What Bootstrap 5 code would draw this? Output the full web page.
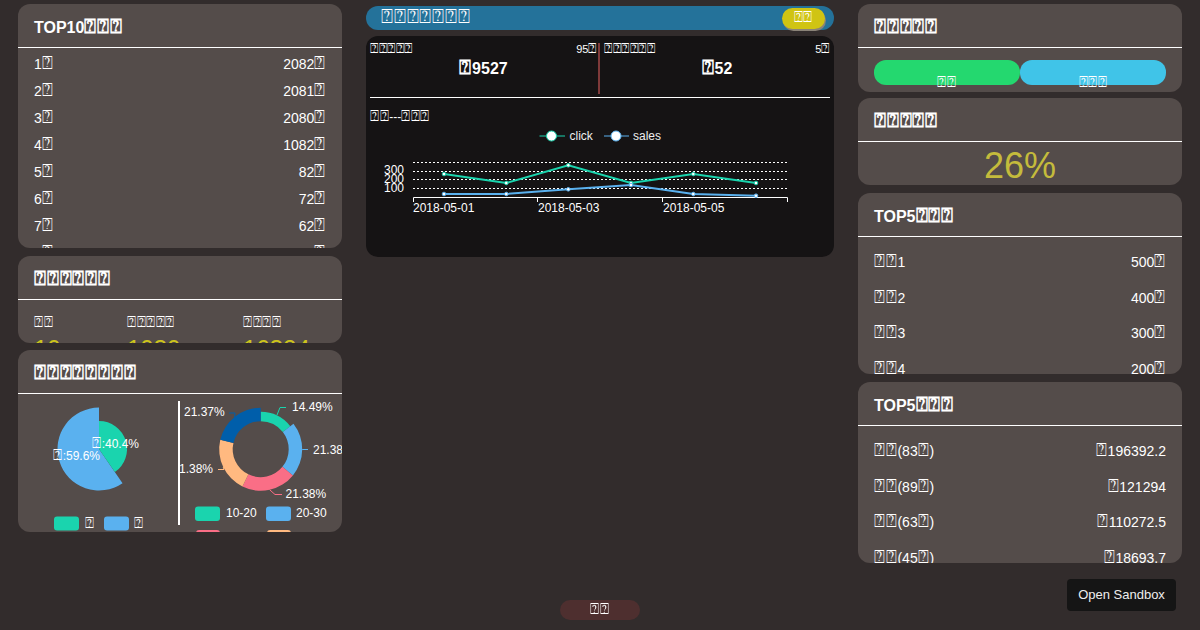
<!doctype html>
<html lang="zh"><head><meta charset="utf-8"><title>Dashboard</title>
<link href="https://cdn.jsdelivr.net/npm/bootstrap@5.3.0/dist/css/bootstrap.min.css" rel="stylesheet">
<style>
html,body{height:100%}
body{background:#322c2c;color:#fff;font:14px/1.5 "Liberation Sans",sans-serif;overflow:hidden}
.q{font-family:"DejaVu Sans",sans-serif;font-size:1.28em;line-height:0;letter-spacing:.04em}
.stage{padding:4px 18px 0;gap:24px}
.side{width:324px;flex:none}
.mid{flex:1 1 auto;min-width:0;padding-top:2px}
.pnl{background:#544c4a;border:0;border-radius:12px;overflow:hidden;color:#fff}
.pnl .card-header{flex:none;background:none;border-bottom:1px solid #fff;border-radius:0;height:44px;padding:4px 16px 0;font-size:16px;font-weight:700;display:flex;align-items:center}
.h244{height:244px}.h87{height:87px}.h88{height:88px}.h182{height:182px}.h181{height:181px}
.m8{margin-top:8px}.m7{margin-top:7px}.m6{margin-top:6px}
.rows27{padding-top:3px}.rows27>div{height:27px;flex:none;align-items:center}
.rows36{padding-top:8px}.rows36>div{height:35.6px;flex:none;align-items:center}
.pad16{padding-left:16px;padding-right:16px}
.tiny{font-size:12px;padding-top:14px;line-height:18px}
.kpi1{width:93px}.kpi2{width:116px}
.big{font-size:24px;color:#cdc41c;line-height:28px;margin-top:3px}
.pct{font-size:36px;line-height:47px;color:#c4bb3c;text-align:center}
.btnrow{padding-top:12px}
.btn-a,.btn-b{flex:1 1 50%;height:25px;border-radius:12px;font-size:12px;line-height:12px;text-align:center;padding-top:17px;overflow:visible}
.btn-a{background:#24d86f}.btn-b{background:#40c4e8}
.topbar{height:24px;background:#24729a;border-radius:12px;padding:0 9px 0 15px;font-size:16px}
.pillb{width:43px;height:21px;border-radius:11px;background:#d0c413;box-shadow:1px 2px 0 #8a8378;font-size:12px;text-align:center;line-height:21px;color:#fff}
.dark{background:#151314;border-radius:12px;height:221px;margin-top:6px;padding:7px 4px 0;overflow:hidden}
.stat{flex:0 0 228px;height:51px;padding:1px 1px 0 0}
.stat+.stat{flex:1 1 auto;border-left:2px solid #7f3a3a;padding:1px 0 0 4px}
.lab{font-size:11px;line-height:11px}
.val{font-size:16px;font-weight:700;text-align:center;line-height:20px;margin-top:4px}
.hline{border-top:1px solid #fff;margin:3px 0 0}
.sub{font-size:12px;line-height:18px;margin-top:10px}
.chartsvg{display:block;width:460px;height:100px}
.pies{width:324px;height:138px;display:block}
.sb{position:fixed;right:24px;bottom:19px;width:109px;height:32px;background:#151515;border-radius:4px;color:#eee;font-size:13px;line-height:32px;text-align:center}
.foot{position:fixed;left:560px;top:600px;width:80px;height:20px;border-radius:10px;background:#4e2f2f;font-size:12px;line-height:20px;text-align:center}
svg text{font-family:"Liberation Sans",sans-serif;font-size:12px;fill:#fff}
svg .q{font-size:15.4px}
</style></head><body>
<div class="d-flex stage">
 <div class="side">
  <div class="card pnl h244"><div class="card-header"><span>TOP10<span class="q">⍰⍰⍰</span></span></div>
   <div class="pad16 rows27">
    <div class="d-flex justify-content-between"><span>1<span class="q">⍰</span></span><span>2082<span class="q">⍰</span></span></div>
    <div class="d-flex justify-content-between"><span>2<span class="q">⍰</span></span><span>2081<span class="q">⍰</span></span></div>
    <div class="d-flex justify-content-between"><span>3<span class="q">⍰</span></span><span>2080<span class="q">⍰</span></span></div>
    <div class="d-flex justify-content-between"><span>4<span class="q">⍰</span></span><span>1082<span class="q">⍰</span></span></div>
    <div class="d-flex justify-content-between"><span>5<span class="q">⍰</span></span><span>82<span class="q">⍰</span></span></div>
    <div class="d-flex justify-content-between"><span>6<span class="q">⍰</span></span><span>72<span class="q">⍰</span></span></div>
    <div class="d-flex justify-content-between"><span>7<span class="q">⍰</span></span><span>62<span class="q">⍰</span></span></div>
    <div class="d-flex justify-content-between"><span>8<span class="q">⍰</span></span><span>52<span class="q">⍰</span></span></div>
   </div></div>
  <div class="card pnl h87 m8"><div class="card-header"><span><span class="q">⍰⍰⍰⍰⍰⍰</span></span></div>
   <div class="d-flex pad16 tiny">
    <div class="kpi1"><span class="q">⍰⍰</span><div class="big">10</div></div>
    <div class="kpi2"><span class="q">⍰⍰⍰⍰⍰</span><div class="big">1030</div></div>
    <div><span class="q">⍰⍰⍰⍰</span><div class="big">16324</div></div>
   </div></div>
  <div class="card pnl h182 m7"><div class="card-header"><span><span class="q">⍰⍰⍰⍰⍰⍰⍰⍰</span></span></div>
   <svg class="pies" viewBox="18 394 324 138" role="img">
    <defs><clipPath id="cr"><rect x="180" y="394" width="162" height="138"/></clipPath></defs>
    <path fill="#5ab1ef" d="M99 449L99 407.5A41.5 41.5 0 1 0 122.54 483.18Z"/>
    <path fill="#1ad4ae" d="M99 449L99 421A28 28 0 0 1 114.88 472.06Z"/>
    <text x="92" y="448"><tspan class="q">⍰</tspan>:40.4%</text>
    <text x="53" y="460"><tspan class="q">⍰</tspan>:59.6%</text>
    <rect x="54" y="516.5" width="25" height="14" rx="3" fill="#1ad4ae"/>
    <text x="85" y="528"><tspan class="q">⍰</tspan></text>
    <rect x="104" y="516.5" width="25" height="14" rx="3" fill="#5ab1ef"/>
    <text x="134" y="528"><tspan class="q">⍰</tspan></text>
    <rect x="178" y="401" width="2" height="124" fill="#fff"/>
    <path fill="#1ad4ae" d="M260.7 411.7A37.5 37.5 0 0 1 290.32 426.2L282.82 432.03A28 28 0 0 0 260.7 421.2Z"/>
    <path fill="#5ab1ef" d="M293.48 423.75A41.5 41.5 0 0 1 292.9 475.39L282.42 466.87A28 28 0 0 0 282.82 432.03Z"/>
    <path fill="#fa6e86" d="M292.9 475.39A41.5 41.5 0 0 1 242.44 486.47L248.38 474.34A28 28 0 0 0 282.42 466.87Z"/>
    <path fill="#ffb980" d="M242.44 486.47A41.5 41.5 0 0 1 220.27 439.83L233.42 442.88A28 28 0 0 0 248.38 474.34Z"/>
    <path fill="#005eaa" d="M220.27 439.83A41.5 41.5 0 0 1 260.7 407.7L260.7 421.2A28 28 0 0 0 233.42 442.88Z"/>
    <g fill="none" stroke-width="1">
     <path stroke="#1ad4ae" d="M277 415L280 407.5L286 407.5"/>
     <path stroke="#5ab1ef" d="M302.2 449.5L308 449.5"/>
     <path stroke="#fa6e86" d="M269.6 489.7L275 494.5L282 494.5"/>
     <path stroke="#ffb980" d="M223.2 467L224 469.5L218 469.5"/>
     <path stroke="#005eaa" d="M234.6 417L235 413L229 413"/>
    </g>
    <text x="292" y="411">14.49%</text>
    <text x="313" y="453.5">21.38%</text>
    <text x="285.5" y="498">21.38%</text>
    <text x="213" y="473" text-anchor="end" clip-path="url(#cr)">21.38%</text>
    <text x="184" y="416">21.37%</text>
    <rect x="195" y="506.5" width="25" height="14.5" rx="3" fill="#1ad4ae"/>
    <text x="226" y="517">10-20</text>
    <rect x="266" y="506.5" width="25" height="14.5" rx="3" fill="#5ab1ef"/>
    <text x="296" y="517">20-30</text>
    <rect x="196" y="530" width="24" height="14" rx="3" fill="#fa6e86"/>
    <rect x="267" y="530" width="24" height="14" rx="3" fill="#ffb980"/>
   </svg>
  </div>
 </div>
 <div class="mid">
  <div class="topbar d-flex align-items-center justify-content-between"><span><span class="q">⍰⍰⍰⍰⍰⍰⍰</span></span><span class="pillb"><span class="q">⍰⍰</span></span></div>
  <div class="dark">
   <div class="d-flex">
    <div class="stat"><div class="d-flex justify-content-between lab"><span><span class="q">⍰⍰⍰⍰⍰</span></span><span>95<span class="q">⍰</span></span></div><div class="val"><span class="q">⍰</span>9527</div></div>
    <div class="stat"><div class="d-flex justify-content-between lab"><span><span class="q">⍰⍰⍰⍰⍰⍰</span></span><span>5<span class="q">⍰</span></span></div><div class="val"><span class="q">⍰</span>52</div></div>
   </div>
   <div class="hline"></div>
   <div class="sub"><span class="q">⍰⍰</span>---<span class="q">⍰⍰⍰</span></div>
   <svg class="chartsvg" viewBox="370 126 460 100" role="img">
    <g stroke="#1ad4ae" fill="none"><path d="M539.5 136H565"/></g>
    <circle cx="551.5" cy="136" r="5" fill="#fff" stroke="#1ad4ae"/>
    <text x="569.5" y="140" style="fill:#eee">click</text>
    <path d="M604 136H629" stroke="#5ab1ef"/>
    <circle cx="616" cy="136" r="5" fill="#fff" stroke="#5ab1ef"/>
    <text x="633" y="140" style="fill:#eee">sales</text>
    <g stroke="#fff" stroke-dasharray="2 2" fill="none">
     <path d="M413 162.5H787"/><path d="M413 171.5H787"/><path d="M413 179.5H787"/><path d="M413 188.5H787"/>
    </g>
    <path d="M413.5 202V197.5H787.5V202M537.5 197.5V202M662.5 197.5V202" stroke="#fff" fill="none"/>
    <text x="404" y="174" text-anchor="end">300</text>
    <text x="404" y="183" text-anchor="end">200</text>
    <text x="404" y="192" text-anchor="end">100</text>
    <text x="413" y="212">2018-05-01</text>
    <text x="538" y="212">2018-05-03</text>
    <text x="663" y="212">2018-05-05</text>
    <polyline points="444,174 506.3,183 568.3,165.3 631,183 693.3,174 756,183" fill="none" stroke="#1ad4ae" stroke-width="2"/>
    <polyline points="444,194 506.3,194 568.3,189.3 631,185 693.3,194 756,195.7" fill="none" stroke="#5ab1ef" stroke-width="2"/>
    <g fill="#fff" stroke="#1ad4ae" stroke-width="1"><circle cx="444" cy="174" r="1.8"/><circle cx="506.3" cy="183" r="1.8"/><circle cx="568.3" cy="165.3" r="1.8"/><circle cx="631" cy="183" r="1.8"/><circle cx="693.3" cy="174" r="1.8"/><circle cx="756" cy="183" r="1.8"/></g>
    <g fill="#fff" stroke="#5ab1ef" stroke-width="1"><circle cx="444" cy="194" r="1.8"/><circle cx="506.3" cy="194" r="1.8"/><circle cx="568.3" cy="189.3" r="1.8"/><circle cx="631" cy="185" r="1.8"/><circle cx="693.3" cy="194" r="1.8"/><circle cx="756" cy="195.7" r="1.8"/></g>
   </svg>
  </div>
 </div>
 <div class="side">
  <div class="card pnl h88"><div class="card-header"><span><span class="q">⍰⍰⍰⍰⍰</span></span></div>
   <div class="d-flex pad16 btnrow"><div class="btn-a"><span class="q">⍰⍰</span></div><div class="btn-b"><span class="q">⍰⍰⍰</span></div></div></div>
  <div class="card pnl h87 m6"><div class="card-header"><span><span class="q">⍰⍰⍰⍰⍰</span></span></div><div class="pct">26%</div></div>
  <div class="card pnl h181 m8"><div class="card-header"><span>TOP5<span class="q">⍰⍰⍰</span></span></div>
   <div class="pad16 rows36">
    <div class="d-flex justify-content-between"><span><span class="q">⍰⍰</span>1</span><span>500<span class="q">⍰</span></span></div>
    <div class="d-flex justify-content-between"><span><span class="q">⍰⍰</span>2</span><span>400<span class="q">⍰</span></span></div>
    <div class="d-flex justify-content-between"><span><span class="q">⍰⍰</span>3</span><span>300<span class="q">⍰</span></span></div>
    <div class="d-flex justify-content-between"><span><span class="q">⍰⍰</span>4</span><span>200<span class="q">⍰</span></span></div>
   </div></div>
  <div class="card pnl h181 m8"><div class="card-header"><span>TOP5<span class="q">⍰⍰⍰</span></span></div>
   <div class="pad16 rows36">
    <div class="d-flex justify-content-between"><span><span class="q">⍰⍰</span>(83<span class="q">⍰</span>)</span><span><span class="q">⍰</span>196392.2</span></div>
    <div class="d-flex justify-content-between"><span><span class="q">⍰⍰</span>(89<span class="q">⍰</span>)</span><span><span class="q">⍰</span>121294</span></div>
    <div class="d-flex justify-content-between"><span><span class="q">⍰⍰</span>(63<span class="q">⍰</span>)</span><span><span class="q">⍰</span>110272.5</span></div>
    <div class="d-flex justify-content-between"><span><span class="q">⍰⍰</span>(45<span class="q">⍰</span>)</span><span><span class="q">⍰</span>18693.7</span></div>
   </div></div>
 </div>
</div>
<div class="foot"><span class="q">⍰⍰</span></div>
<div class="sb">Open Sandbox</div>
</body></html>
